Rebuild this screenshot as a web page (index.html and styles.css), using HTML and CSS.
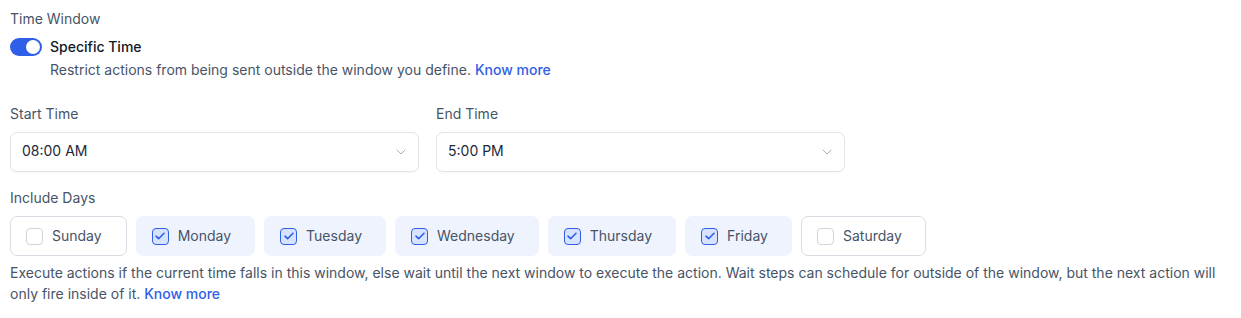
FILE: index.html
```html
<!DOCTYPE html>
<html>
<head>
<meta charset="utf-8">
<link rel="stylesheet" href="styles.css">
</head>
<body>
<div class="page">
  <div class="label">Time Window</div>
  <div class="toggle-row">
    <span class="toggle"><span class="knob"></span></span>
    <span class="toggle-title">Specific Time</span>
  </div>
  <div class="desc">Restrict actions from being sent outside the window you define. <a class="link">Know more</a></div>

  <div class="times">
    <div class="field">
      <div class="label">Start Time</div>
      <div class="select"><span>08:00 AM</span>
        <svg class="chev" width="10" height="6" viewBox="0 0 10 6"><path d="M1 1l4 4 4-4" fill="none" stroke="#a9b0bb" stroke-width="1" stroke-linecap="round" stroke-linejoin="round"/></svg>
      </div>
    </div>
    <div class="field">
      <div class="label">End Time</div>
      <div class="select"><span>5:00 PM</span>
        <svg class="chev" width="10" height="6" viewBox="0 0 10 6"><path d="M1 1l4 4 4-4" fill="none" stroke="#a9b0bb" stroke-width="1" stroke-linecap="round" stroke-linejoin="round"/></svg>
      </div>
    </div>
  </div>

  <div class="label days-label">Include Days</div>
  <div class="days">
    <div class="chip sun"><span class="cb"></span>Sunday</div>
    <div class="chip on"><span class="cb"><svg width="12" height="10" viewBox="0 0 12 10"><path d="M2 5.2l2.6 2.5L10 2.3" fill="none" stroke="#2f5ee8" stroke-width="1.6" stroke-linecap="round" stroke-linejoin="round"/></svg></span>Monday</div>
    <div class="chip on"><span class="cb"><svg width="12" height="10" viewBox="0 0 12 10"><path d="M2 5.2l2.6 2.5L10 2.3" fill="none" stroke="#2f5ee8" stroke-width="1.6" stroke-linecap="round" stroke-linejoin="round"/></svg></span>Tuesday</div>
    <div class="chip on"><span class="cb"><svg width="12" height="10" viewBox="0 0 12 10"><path d="M2 5.2l2.6 2.5L10 2.3" fill="none" stroke="#2f5ee8" stroke-width="1.6" stroke-linecap="round" stroke-linejoin="round"/></svg></span>Wednesday</div>
    <div class="chip on"><span class="cb"><svg width="12" height="10" viewBox="0 0 12 10"><path d="M2 5.2l2.6 2.5L10 2.3" fill="none" stroke="#2f5ee8" stroke-width="1.6" stroke-linecap="round" stroke-linejoin="round"/></svg></span>Thursday</div>
    <div class="chip on"><span class="cb"><svg width="12" height="10" viewBox="0 0 12 10"><path d="M2 5.2l2.6 2.5L10 2.3" fill="none" stroke="#2f5ee8" stroke-width="1.6" stroke-linecap="round" stroke-linejoin="round"/></svg></span>Friday</div>
    <div class="chip"><span class="cb"></span>Saturday</div>
  </div>
  <div class="note">Execute actions if the current time falls in this window, else wait until the next window to execute the action. Wait steps can schedule for outside of the window, but the next action will only fire inside of it. <a class="link">Know more</a></div>
</div>
</body>
</html>
```

FILE: styles.css
```css
* { box-sizing: border-box; }
html, body { margin: 0; background: #ffffff; }
body {
  font-family: Inter, "Noto Sans", sans-serif;
  font-size: 14px;
  color: #475467;
}
.page {
  padding: 9px 10px;
}
.label {
  line-height: 20px;
  color: #475467;
}
.toggle-row {
  margin-top: 8px;
  display: flex;
  align-items: center;
  gap: 8px;
  height: 20px;
}
.toggle {
  width: 32px;
  height: 18px;
  border-radius: 9px;
  background: #2f5ee8;
  display: flex;
  align-items: center;
  justify-content: flex-end;
  padding: 0 2px;
}
.knob {
  width: 14px;
  height: 14px;
  border-radius: 50%;
  background: #ffffff;
}
.toggle-title {
  color: #101828;
  font-weight: 500;
  line-height: 20px;
}
.desc {
  margin-top: 3px;
  margin-left: 40px;
  line-height: 20px;
}
.link {
  color: #2f5ee8;
  font-weight: 500;
  text-decoration: none;
}
.times {
  margin-top: 24px;
  display: grid;
  grid-template-columns: 409px 409px;
  gap: 17px;
}
.select {
  margin-top: 8px;
  height: 40px;
  border: 1px solid #e1e4ea;
  border-radius: 7px;
  display: flex;
  align-items: center;
  justify-content: space-between;
  padding: 0 12px 3px 11px;
  color: #1d2939;
  box-shadow: 0 1px 2px rgba(16, 24, 40, 0.04);
}
.select .chev {
  margin-top: 3px;
}
.days-label {
  margin-top: 16px;
}
.days {
  margin-top: 8px;
  display: flex;
  gap: 9px;
}
.chip {
  height: 40px;
  display: flex;
  align-items: center;
  gap: 9px;
  padding: 0 23px 1px 15px;
  border: 1px solid #d7dbe2;
  border-radius: 7px;
  background: #ffffff;
  color: #475467;
}
.chip.sun {
  padding-right: 24px;
}
.chip.on {
  background: #eef3fe;
  border-color: #eef3fe;
}
.cb {
  width: 17px;
  height: 17px;
  margin-top: 1px;
  border: 1px solid #d0d5dd;
  border-radius: 4px;
  background: #ffffff;
  display: flex;
  align-items: center;
  justify-content: center;
}
.chip.on .cb {
  border-color: #2f5ee8;
  background: #d6e2ff;
}
.note {
  margin-top: 6px;
  line-height: 21px;
  color: #475467;
}
```
